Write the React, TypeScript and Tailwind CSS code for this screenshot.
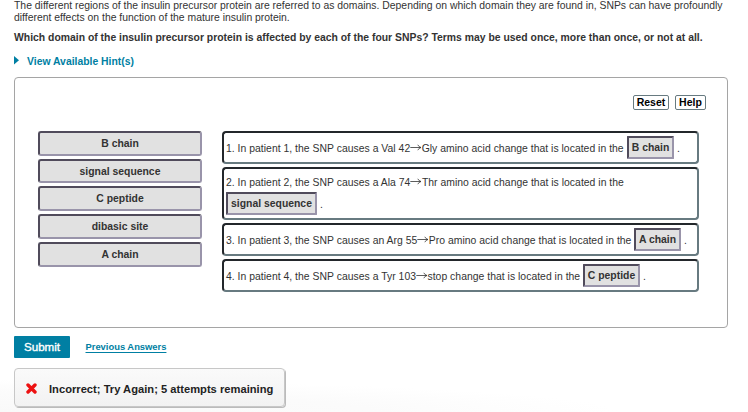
import type { ReactNode } from "react";

function Arrow() {
  return (
    <svg className="relative -top-px inline-block h-[7px] w-[11.5px] shrink-0 align-baseline" viewBox="0 0 11.5 7" fill="none" stroke="#333" strokeWidth="0.8">
      <path d="M0.3 3.5H11M7.8 0.8Q8.8 3 11 3.5Q8.8 4 7.8 6.2" />
    </svg>
  );
}

function Term({ children, className }: { children: ReactNode; className: string }) {
  return (
    <span
      className={`flex h-[23px] shrink-0 items-center justify-center rounded-[1px] border-2 border-t-[#504b5b] border-l-[#504b5b] border-r-[#9994aa] border-b-[#9994aa] bg-[#e1e1e1] pt-px font-bold tracking-normal whitespace-nowrap ${className}`}
    >
      {children}
    </span>
  );
}

function Target({ children, className }: { children: ReactNode; className: string }) {
  return (
    <div
      className={`flex w-[477px] rounded-[4px] border-2 border-t-[#23272b] border-l-[#23272b] border-r-[#677a80] border-b-[#677a80] pl-[2px] tracking-[0.022px] whitespace-nowrap ${className}`}
    >
      {children}
    </div>
  );
}

const terms = [
  { label: "B chain", size: "h-[25px]" },
  { label: "signal sequence", size: "h-[24px]" },
  { label: "C peptide", size: "h-[25px]" },
  { label: "dibasic site", size: "h-[25px]" },
  { label: "A chain", size: "h-[25px]" },
];

export default function App() {
  return (
    <div className="h-[412px] w-[748px] overflow-hidden bg-[radial-gradient(ellipse_620px_32px_at_0px_412px,#f9f9f9_0%,#fbfbfb_60%,#fff_100%)] pl-[14px] font-['Liberation_Sans',Arial,sans-serif] text-[10.4px] leading-[12px] text-[#333]">
      <p className="whitespace-nowrap">
        The different regions of the insulin precursor protein are referred to as domains. Depending on which domain they are found in, SNPs can have profoundly
        <br />
        different effects on the function of the mature insulin protein.
      </p>
      <p className="mt-[8px] font-bold whitespace-nowrap">
        Which domain of the insulin precursor protein is affected by each of the four SNPs? Terms may be used once, more than once, or not at all.
      </p>
      <div className="mt-[12px] flex h-[12px] items-start font-bold text-[#007fa3]">
        <svg className="h-[9px] w-[5px]" viewBox="0 0 5 9" fill="currentColor">
          <path d="M0 0L5 4.2L0 8.6Z" />
        </svg>
        <span className="ml-[8px]">View Available Hint(s)</span>
      </div>

      <section className="mt-[9px] h-[251px] w-[714px] rounded-[4px] border border-[#a5a5a5] bg-white">
        <div className="flex justify-end gap-[6px] pt-[17px] pr-[21px] text-[10.5px] font-bold text-black">
          <button className="h-[15px] w-[36px] rounded-[2px] border border-[#677a80] leading-[13px]">Reset</button>
          <button className="h-[15px] w-[31px] rounded-[2px] border border-[#677a80] leading-[13px]">Help</button>
        </div>
        <div className="mt-[21px] flex gap-[20px] pl-[23px]">
          <div className="flex w-[164px] flex-col gap-[3px]">
            {terms.map((t) => (
              <div
                key={t.label}
                className={`flex items-center justify-center rounded-[3px] border-2 border-t-[#504b5b] border-l-[#504b5b] border-r-[#9994aa] border-b-[#9994aa] bg-[#e1e1e1] pt-px font-bold ${t.size}`}
              >
                {t.label}
              </div>
            ))}
          </div>
          <div className="flex flex-col gap-[3px]">
            <Target className="h-[33px] pt-[3px]">
              <span className="mt-[7px] w-[401px]">1. In patient 1, the SNP causes a Val 42<Arrow />Gly amino acid change that is located in the</span>
              <Term className="w-[47px]">B chain</Term>
              <span className="mt-[7px] ml-[3px]">.</span>
            </Target>
            <Target className="h-[53px] flex-col pt-[8px]">
              <span>2. In patient 2, the SNP causes a Ala 74<Arrow />Thr amino acid change that is located in the</span>
              <span className="mt-[3px] flex">
                <Term className="w-[91px]">signal sequence</Term>
                <span className="mt-[7px] ml-[3px]">.</span>
              </span>
            </Target>
            <Target className="h-[33px] pt-[3px]">
              <span className="mt-[7px] w-[408px]">3. In patient 3, the SNP causes an Arg 55<Arrow />Pro amino acid change that is located in the</span>
              <Term className="w-[47px]">A chain</Term>
              <span className="mt-[7px] ml-[3px]">.</span>
            </Target>
            <Target className="h-[33px] pt-[3px]">
              <span className="mt-[7px] w-[357px]">4. In patient 4, the SNP causes a Tyr 103<Arrow />stop change that is located in the</span>
              <Term className="w-[57px]">C peptide</Term>
              <span className="mt-[7px] ml-[3px]">.</span>
            </Target>
          </div>
        </div>
      </section>

      <div className="mt-[8px] flex h-[22px] items-center font-bold">
        <button className="h-[22px] w-[56px] rounded-[1px] bg-[#007fa3] text-[11.6px] font-normal text-white [-webkit-text-stroke:0.35px_#fff]">Submit</button>
        <a className="ml-[15.5px] text-[9.4px] text-[#007fa3] underline underline-offset-2">Previous Answers</a>
      </div>

      <div className="mt-[10px] flex h-[39px] w-[271px] items-center rounded-[4px] border border-[#c7c7c7] bg-[linear-gradient(#fafafa,#f2f2f2)] pl-[11px] font-bold text-[#222] shadow-[1px_1px_0_#bbb]">
        <svg className="mt-px h-[11px] w-[11px]" viewBox="0 0 11 11" stroke="#ed1111" strokeWidth="3.4" strokeLinecap="round">
          <path d="M2 2L9 9M9 2L2 9" />
        </svg>
        <span className="mt-[3px] ml-[12px] text-[11.15px] tracking-[0.015px] whitespace-nowrap">Incorrect; Try Again; 5 attempts remaining</span>
      </div>
    </div>
  );
}
